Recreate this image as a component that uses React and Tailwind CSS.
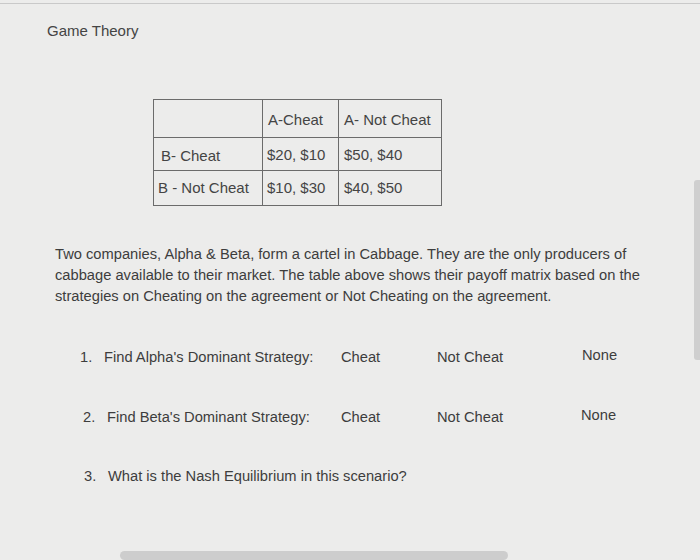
export default function App() {
  const font = { fontFamily: '"Liberation Sans", Arial, sans-serif' };
  return (
    <div className="relative w-[700px] h-[560px] overflow-hidden bg-[#ececeb] text-[#3a3a3a]" style={font}>
      <div className="h-[4px] border-b border-[#c9c9c9]" />
      <div className="pl-[47px] pt-[17px] text-[15px] leading-[20px] text-[#444]">Game Theory</div>

      <div className="ml-[153px] mt-[58px] w-[289px]">
        <table className="border-collapse text-[15px] text-[#444] border border-[#6b6b6b]">
          <tbody>
            <tr className="h-[38px]">
              <td className="w-[109px] border border-[#6b6b6b]"></td>
              <td className="w-[76px] border border-[#6b6b6b] px-[5px] pt-[4px]">A-Cheat</td>
              <td className="w-[103px] border border-[#6b6b6b] px-[5px] pt-[4px]">A- Not Cheat</td>
            </tr>
            <tr className="h-[33px]">
              <td className="border border-[#6b6b6b] px-[7px] pt-[4px]">B- Cheat</td>
              <td className="border border-[#6b6b6b] px-[4px] pt-[2px]">$20, $10</td>
              <td className="border border-[#6b6b6b] px-[5px] pt-[2px]">$50, $40</td>
            </tr>
            <tr className="h-[35px]">
              <td className="border border-[#6b6b6b] px-[4px]">B - Not Cheat</td>
              <td className="border border-[#6b6b6b] px-[4px]">$10, $30</td>
              <td className="border border-[#6b6b6b] px-[5px]">$40, $50</td>
            </tr>
          </tbody>
        </table>
      </div>

      <p className="ml-[55px] mt-[38px] w-[600px] text-[14.7px] leading-[21px] text-[#3d3d3d]">
        Two companies, Alpha &amp; Beta, form a cartel in Cabbage. They are the only producers of cabbage available to their market. The table above shows their payoff matrix based on the strategies on Cheating on the agreement or Not Cheating on the agreement.
      </p>

      <div className="mt-[40px] text-[14.7px] leading-[20px] text-[#3d3d3d]">
        <div className="flex items-center h-[20px]">
          <span className="ml-[80px] w-[24px]">1.</span>
          <span className="w-[237px]">Find Alpha's Dominant Strategy:</span>
          <span className="w-[96px]">Cheat</span>
          <span className="w-[145px]">Not Cheat</span>
          <span className="-mt-[4px]">None</span>
        </div>
        <div className="flex items-center h-[20px] mt-[40px]">
          <span className="ml-[83px] w-[24px]">2.</span>
          <span className="w-[234px]">Find Beta's Dominant Strategy:</span>
          <span className="w-[96px]">Cheat</span>
          <span className="w-[144px]">Not Cheat</span>
          <span className="-mt-[4px]">None</span>
        </div>
        <div className="flex items-center h-[20px] mt-[39px]">
          <span className="ml-[84px] w-[24px]">3.</span>
          <span>What is the Nash Equilibrium in this scenario?</span>
        </div>
      </div>

      <div className="absolute right-0 top-[180px] w-[6px] h-[180px] rounded-l-[3px] bg-[#cfcfcf]" />
      <div className="absolute left-[120px] top-[551px] w-[388px] h-[9px] rounded-[5px] bg-[#cdcdcd]" />
    </div>
  );
}
